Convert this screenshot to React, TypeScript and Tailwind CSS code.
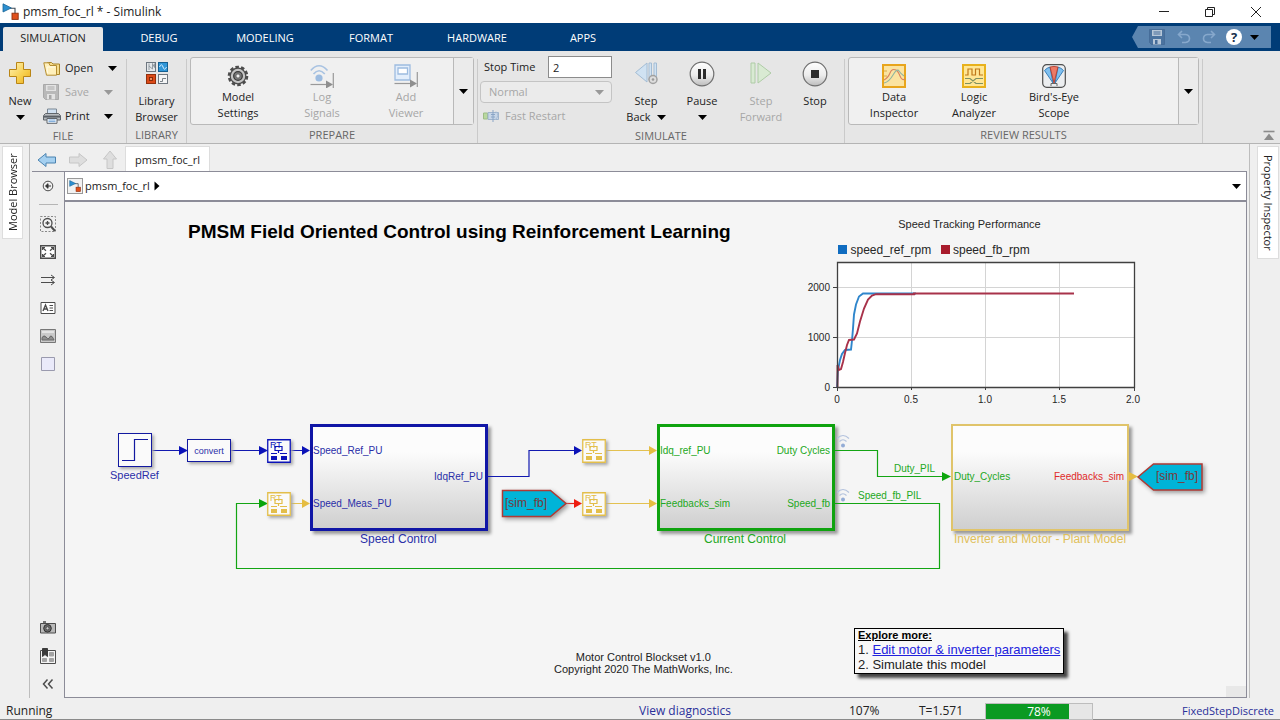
import React from "react";

type Kids = { children?: React.ReactNode };

/* ---------- small glyphs ---------- */

function Caret({ className = "text-black" }: { className?: string }) {
  return (
    <svg className={className} width="9" height="5" viewBox="0 0 9 5" aria-hidden="true">
      <path d="M0 0h9L4.5 5z" fill="currentColor" />
    </svg>
  );
}

function ModelIcon({ size }: { size: number }) {
  return (
    <svg width={size} height={size} viewBox="0 0 17 17" aria-hidden="true">
      <path d="M8 5.2h5v6" fill="none" stroke="#3c4a55" strokeWidth="1.1" />
      <path d="M1 0.8L9.3 4.9 1 9z" fill="#2c8fd0" stroke="#1b6496" strokeWidth="0.8" />
      <rect x="10" y="10.2" width="6.2" height="6.2" fill="#e0501c" stroke="#8f2f0d" strokeWidth="0.9" />
    </svg>
  );
}

function NewIcon() {
  return (
    <svg width="24" height="24" viewBox="0 0 24 24" aria-hidden="true">
      <defs>
        <linearGradient id="gold" x1="0" y1="0" x2="1" y2="1">
          <stop offset="0" stopColor="#fff3b8" />
          <stop offset="0.6" stopColor="#f7cf4d" />
          <stop offset="1" stopColor="#e9a91e" />
        </linearGradient>
      </defs>
      <path d="M8.5 1.5h7v7h7v7h-7v7h-7v-7h-7v-7h7z" fill="url(#gold)" stroke="#b98515" />
    </svg>
  );
}

function FolderIcon() {
  return (
    <svg width="18" height="16" viewBox="0 0 18 16" aria-hidden="true">
      <path d="M4.500 3.500V2.500h4l1.500 1.500h6.500v10.500H5" fill="#f5dc8c" stroke="#a98429" />
      <path d="M0.800 2.800h5L7 5.500h6.500v9.700H3.500z" fill="#fff0bb" stroke="#b48d31" />
      <path d="M4.500 13L4 7h8" fill="none" stroke="#fffbe6" />
    </svg>
  );
}

function FloppyIcon({ tone = "text-[#a9a9a9]" }: { tone?: string }) {
  return (
    <svg className={tone} width="16" height="16" viewBox="0 0 16 16" aria-hidden="true">
      <path d="M0.5 0.5h15v15h-13l-2-2z" fill="currentColor" opacity="0.75" />
      <path d="M0.5 0.5h15v15h-13l-2-2z" fill="none" stroke="currentColor" />
      <path d="M3 1h10v6H3z" fill="#fff" opacity="0.6" />
      <path d="M4.5 3h7M4.5 5h7" stroke="currentColor" />
      <path d="M4 10h8v5.5H4z" fill="#fff" opacity="0.6" />
      <path d="M6 11h2.5v4H6z" fill="currentColor" />
    </svg>
  );
}

function PrinterIcon() {
  return (
    <svg width="18" height="16" viewBox="0 0 18 16" aria-hidden="true">
      <path d="M4.5 6V1h9v5" fill="#cfe0f2" stroke="#7b8793" />
      <path d="M2.5 5.5h13l2 2v4.5H0.5V7.5z" fill="#b8bcc0" stroke="#5f656b" />
      <path d="M1 7.6h16v2H1z" fill="#5a6067" />
      <path d="M4 10.5h10v4.8H4z" fill="#f5faff" stroke="#5f656b" />
      <path d="M5.5 12h7M5.5 13.6h7" stroke="#7aa7d8" />
    </svg>
  );
}

function LibraryIcon() {
  return (
    <svg width="24" height="24" viewBox="0 0 24 24" aria-hidden="true">
      <rect x="1.5" y="1.5" width="9" height="9" fill="#e4e7ea" stroke="#6e7780" />
      <path d="M4 9V2.500M4 5l3.500 3V2.500l2 4V2.500" fill="none" stroke="#8a939b" strokeWidth="0.9" />
      <rect x="13.5" y="1.5" width="9" height="9" fill="#2f96d8" stroke="#155f91" />
      <path d="M14.5 6q2-4.500 3.500 0t3.500 0" fill="none" stroke="#d4edff" />
      <rect x="1.500" y="13.500" width="9" height="9" fill="#dc4a18" stroke="#92300d" />
      <rect x="4.500" y="16.500" width="3" height="3" fill="#ef8c60" stroke="#7d2606" strokeWidth="0.9" />
      <rect x="13.500" y="13.500" width="9" height="9" fill="#f4f5f6" stroke="#6e7780" />
      <path d="M15 20.500h2.500v-3h3.500" fill="none" stroke="#6b747c" strokeWidth="0.900" />
    </svg>
  );
}

function GearIcon() {
  return (
    <svg width="24" height="24" viewBox="0 0 24 24" aria-hidden="true">
      <circle cx="12" cy="12" r="9" fill="none" stroke="#4d4d4d" strokeWidth="2.600" strokeDasharray="3.500 2.150" />
      <circle cx="12" cy="12" r="7.800" fill="#c4c4c4" stroke="#4a4a4a" strokeWidth="1.200" />
      <circle cx="12" cy="12" r="4.300" fill="#7b7b7b" stroke="#3b3b3b" strokeWidth="1.300" />
      <circle cx="12" cy="12" r="2" fill="#f0f0f0" stroke="#4a4a4a" strokeWidth="0.600" />
    </svg>
  );
}

function LogIcon() {
  return (
    <svg width="24" height="24" viewBox="0 0 24 24" aria-hidden="true">
      <g fill="none" stroke="#a9c3e2" strokeWidth="1.700">
        <path d="M0.800 6.500Q9 -3 17.500 6.500" />
        <path d="M3.500 10Q9 3.500 14.800 10" />
      </g>
      <circle cx="9" cy="14" r="3.600" fill="#9dbce0" />
      <path d="M0.500 20.500h17" stroke="#999" strokeWidth="1.200" />
      <path d="M16 16.500l7 4-7 4z" fill="#8f8f8f" />
      <path d="M23.300 9v15" stroke="#999" strokeWidth="1.200" />
    </svg>
  );
}

function ViewerIcon() {
  return (
    <svg width="24" height="24" viewBox="0 0 24 24" aria-hidden="true">
      <path d="M1 1h15v15H1z" fill="#e3eefb" stroke="#9dbce0" strokeWidth="1.300" />
      <path d="M4 4h9.500v6H4z" fill="#fff" stroke="#9dbce0" strokeWidth="1.300" />
      <path d="M0.500 19.500h17" stroke="#999" strokeWidth="1.200" />
      <path d="M16 15.500l7 4-7 4z" fill="#8f8f8f" />
      <path d="M23.300 8v15" stroke="#999" strokeWidth="1.200" />
    </svg>
  );
}

function FastRestartIcon() {
  return (
    <svg width="17" height="14" viewBox="0 0 17 14" aria-hidden="true">
      <path d="M0.500 4h4v6h-4z" fill="#b9d8a0" stroke="#9dbd86" />
      <path d="M5 3.500h10.500v7H5z" fill="#c7d6e8" stroke="#9fb4cd" />
      <path d="M8 5.500h4M8 8h4M10 1v12" stroke="#8aa5c6" />
      <path d="M13 2.500q4 4-1 8.500" fill="none" stroke="#a9bdd5" />
    </svg>
  );
}

function StepBackIcon() {
  return (
    <svg width="24" height="24" viewBox="0 0 24 24" aria-hidden="true">
      <path d="M13 2v19L1.500 11.500z" fill="#d0e2f2" stroke="#a3bcd4" />
      <path d="M15 2h2.500v17H15zM20 2h2.500v14H20z" fill="#d0e2f2" stroke="#a3bcd4" />
      <circle cx="19" cy="18.500" r="4" fill="#ddd" stroke="#a0a0a0" strokeWidth="1.500" />
      <circle cx="19" cy="18.500" r="1.300" fill="#999" />
    </svg>
  );
}

function StepForwardIcon() {
  return (
    <svg width="24" height="24" viewBox="0 0 24 24" aria-hidden="true">
      <path d="M2 2h4v20H2z" fill="#d9ead3" stroke="#aecba6" />
      <path d="M9 2v20l13-10z" fill="#d9ead3" stroke="#aecba6" />
    </svg>
  );
}

function RoundButtonIcon({ children }: Kids) {
  return (
    <svg width="26" height="26" viewBox="0 0 26 26" aria-hidden="true">
      <defs>
        <linearGradient id="disc" x1="0" y1="0" x2="0" y2="1">
          <stop offset="0" stopColor="#ffffff" />
          <stop offset="0.550" stopColor="#ececec" />
          <stop offset="1" stopColor="#bdbdbd" />
        </linearGradient>
      </defs>
      <circle cx="13" cy="13" r="11.800" fill="url(#disc)" stroke="#6f6f6f" strokeWidth="1.200" />
      {children}
    </svg>
  );
}

function DataInspectorIcon() {
  return (
    <svg width="24" height="24" viewBox="0 0 24 24" aria-hidden="true">
      <path d="M1 1h22v22H1z" fill="#fbe3a0" stroke="#e8a51c" strokeWidth="2" />
      <path d="M2 16Q6 14 8 9t6-3q2 1 4 6t5 3" fill="none" stroke="#d9825f" strokeWidth="1.100" />
      <path d="M2 19q5-1 9-8t6-4 5 5" fill="none" stroke="#8fb5a0" strokeWidth="1.100" />
      <path d="M2 7h3M2 12h3" stroke="#d8a94a" />
    </svg>
  );
}

function LogicIcon() {
  return (
    <svg width="24" height="24" viewBox="0 0 24 24" aria-hidden="true">
      <path d="M1 1h22v22H1z" fill="#ffe694" stroke="#e8b11c" strokeWidth="2" />
      <path d="M3 11h3V5h4v6h3.500V5h4v6H21" fill="none" stroke="#c0791a" strokeWidth="1.200" />
      <path d="M3 14.500h5l6 5h7M3 19.500h5l6-5h7" fill="none" stroke="#7f9160" strokeWidth="1.200" />
    </svg>
  );
}

function BirdsEyeIcon() {
  return (
    <svg width="24" height="24" viewBox="0 0 24 24" aria-hidden="true">
      <rect x="0.700" y="0.700" width="22.600" height="22.600" rx="4" fill="#eceef0" stroke="#4f4f4f" strokeWidth="1.200" />
      <path d="M2.500 6.500Q5 3.800 8 3l3 16z" fill="#7fc0f0" stroke="#2c77b4" strokeWidth="0.900" />
      <path d="M21.500 6.500Q19 3.800 16 3l-3 16z" fill="#7fc0f0" stroke="#2c77b4" strokeWidth="0.900" />
      <path d="M8 3q4-1.200 8 0l-4 16z" fill="#ec7a66" stroke="#b23a2a" strokeWidth="0.900" />
      <path d="M9 22v-2.500h6V22" fill="none" stroke="#666" />
    </svg>
  );
}

/* ---------- ribbon pieces ---------- */

function Group({ label, className, children }: Kids & { label: string; className: string }) {
  return (
    <section aria-label={label} className={`flex h-full shrink-0 flex-col ${className}`}>
      <div className="flex h-[77px]">{children}</div>
      <div className="text-center leading-4 text-[#666]">{label}</div>
    </section>
  );
}

function Rule() {
  return <div className="mt-2 h-[84px] w-px shrink-0 bg-[#cacaca]" />;
}

function BigButton(props: {
  icon: React.ReactNode;
  lines: [string, string?];
  caret?: boolean;
  disabled?: boolean;
  className: string;
}) {
  const { icon, lines, caret, disabled, className } = props;
  return (
    <button
      type="button"
      disabled={disabled}
      className={`flex shrink-0 flex-col items-center pt-[10px] leading-4 ${disabled ? "text-[#a6a6a6]" : "text-[#222]"} ${className}`}
    >
      <span className="flex h-8 items-start justify-center">{icon}</span>
      <span className="h-4 whitespace-nowrap">{lines[0]}</span>
      <span className="flex h-4 items-center gap-[6px] whitespace-nowrap">
        {lines[1]}
        {caret && <Caret />}
      </span>
    </button>
  );
}

function GalleryButton(props: { icon: React.ReactNode; lines: [string, string]; disabled?: boolean; className: string }) {
  const { icon, lines, disabled, className } = props;
  return (
    <button
      type="button"
      disabled={disabled}
      className={`flex shrink-0 flex-col items-center pt-[6px] leading-4 ${disabled ? "text-[#a6a6a6]" : "text-[#222]"} ${className}`}
    >
      <span className="flex h-[25px] items-start">{icon}</span>
      <span>{lines[0]}</span>
      <span>{lines[1]}</span>
    </button>
  );
}

function Gallery({ label, className, children }: Kids & { label: string; className: string }) {
  return (
    <div className={`mt-[6px] flex h-[68px] rounded-[3px] border border-[#b9b9b9] bg-[#f0f0f0] ${className}`}>
      <div className="flex flex-1 pl-[5px]">{children}</div>
      <button type="button" aria-label={label} className="flex w-5 items-center justify-center border-l border-[#b9b9b9] bg-[#ebebeb]">
        <Caret />
      </button>
    </div>
  );
}

function FileRow(props: { icon: React.ReactNode; label: string; disabled?: boolean; caretClass: string }) {
  const { icon, label, disabled, caretClass } = props;
  return (
    <button
      type="button"
      disabled={disabled}
      className={`flex h-6 items-center text-left ${disabled ? "text-[#a6a6a6]" : "text-[#222]"}`}
    >
      <span className="flex w-[22px] items-center">{icon}</span>
      <span className={caretClass}>{label}</span>
      <Caret className={disabled ? "text-[#999]" : "text-black"} />
    </button>
  );
}

function Ribbon() {
  return (
    <div className="flex h-[93px] shrink-0 border-b border-[#b4b4b4] bg-[#e6e6e6]">
      <Group label="FILE" className="w-[126px]">
        <BigButton icon={<NewIcon />} lines={["New"]} caret className="w-10" />
        <div className="flex flex-col pt-[5px] pl-[3px]">
          <FileRow icon={<FolderIcon />} label="Open" caretClass="w-[43px]" />
          <FileRow icon={<FloppyIcon />} label="Save" disabled caretClass="w-[39px]" />
          <FileRow icon={<PrinterIcon />} label="Print" caretClass="w-[39px]" />
        </div>
      </Group>
      <Rule />
      <Group label="LIBRARY" className="w-[59px]">
        <BigButton icon={<LibraryIcon />} lines={["Library", "Browser"]} className="w-[59px]" />
      </Group>
      <Rule />
      <Group label="PREPARE" className="w-[290px]">
        <Gallery label="More prepare tools" className="ml-[3px] w-[284px]">
          <GalleryButton icon={<GearIcon />} lines={["Model", "Settings"]} className="w-[84px]" />
          <GalleryButton icon={<LogIcon />} lines={["Log", "Signals"]} disabled className="w-[84px]" />
          <GalleryButton icon={<ViewerIcon />} lines={["Add", "Viewer"]} disabled className="w-[84px]" />
        </Gallery>
      </Group>
      <Rule />
      <Group label="SIMULATE" className="w-[366px]">
        <div className="flex w-[134px] flex-col pt-[5px] pl-[2px]">
          <div className="flex h-[22px] items-center justify-between">
            <label htmlFor="stop-time" className="pl-1 text-[#222]">
              Stop Time
            </label>
            <input
              id="stop-time"
              defaultValue="2"
              className="h-[22px] w-16 border border-[#8c8c8c] bg-white px-1 text-[#222] outline-none"
            />
          </div>
          <div className="relative mt-[3px]">
            <select
              aria-label="Simulation mode"
              disabled
              className="h-[22px] w-full appearance-none rounded border border-[#c4c4c4] bg-[#ebebeb] pl-2 text-[#a6a6a6]"
            >
              <option>Normal</option>
            </select>
            <span className="pointer-events-none absolute top-[9px] right-2">
              <Caret className="text-[#999]" />
            </span>
          </div>
          <button type="button" disabled className="flex h-7 items-center gap-[5px] pl-[3px] text-[#a6a6a6]">
            <FastRestartIcon />
            Fast Restart
          </button>
        </div>
        <BigButton icon={<StepBackIcon />} lines={["Step", "Back"]} caret className="w-[68px]" />
        <BigButton
          icon={
            <RoundButtonIcon>
              <path d="M9 8h3v10H9zM14 8h3v10h-3z" fill="#2b2b2b" />
            </RoundButtonIcon>
          }
          lines={["Pause"]}
          caret
          className="w-11"
        />
        <BigButton icon={<StepForwardIcon />} lines={["Step", "Forward"]} disabled className="w-[74px]" />
        <BigButton
          icon={
            <RoundButtonIcon>
              <path d="M9 9h8v8H9z" fill="#2b2b2b" />
            </RoundButtonIcon>
          }
          lines={["Stop"]}
          className="w-[34px]"
        />
      </Group>
      <Rule />
      <Group label="REVIEW RESULTS" className="w-[357px]">
        <Gallery label="More review tools" className="ml-[3px] w-[351px]">
          <GalleryButton icon={<DataInspectorIcon />} lines={["Data", "Inspector"]} className="w-20" />
          <GalleryButton icon={<LogicIcon />} lines={["Logic", "Analyzer"]} className="w-20" />
          <GalleryButton icon={<BirdsEyeIcon />} lines={["Bird's-Eye", "Scope"]} className="w-20" />
        </Gallery>
      </Group>
      <Rule />
      <div className="flex flex-1 items-end justify-end pr-[5px] pb-[2px]">
        <button type="button" aria-label="Collapse toolstrip">
          <svg width="12" height="11" viewBox="0 0 12 11" className="block" aria-hidden="true">
            <path d="M0.500 1.500h11" stroke="#8b8b8b" strokeWidth="1.600" />
            <path d="M6 3.500l5 6.500H1z" fill="#8b8b8b" />
          </svg>
        </button>
      </div>
    </div>
  );
}

/* ---------- title and tabs ---------- */

function TitleBar() {
  return (
    <header className="flex h-[23px] shrink-0 items-center bg-white pl-[2px] text-[12px]">
      <ModelIcon size={17} />
      <h1 className="pl-1 text-[#222]">pmsm_foc_rl * - Simulink</h1>
      <div className="ml-auto flex items-center">
        <button type="button" aria-label="Minimize" className="flex w-[46px] justify-center">
          <svg width="12" height="12" viewBox="0 0 12 12" aria-hidden="true">
            <path d="M1 5.500h10" stroke="#222" />
          </svg>
        </button>
        <button type="button" aria-label="Restore" className="flex w-[45px] justify-center">
          <svg width="12" height="12" viewBox="0 0 12 12" aria-hidden="true">
            <path d="M1.500 3.500h7v7h-7zM3.500 3.500v-2h7v7h-2" fill="none" stroke="#222" />
          </svg>
        </button>
        <button type="button" aria-label="Close" className="flex w-12 justify-center">
          <svg width="12" height="12" viewBox="0 0 12 12" aria-hidden="true">
            <path d="M1 1l10 10M11 1L1 11" stroke="#222" />
          </svg>
        </button>
      </div>
    </header>
  );
}

function TabBar() {
  const tabs = ["DEBUG", "MODELING", "FORMAT", "HARDWARE", "APPS"];
  return (
    <nav aria-label="Toolstrip" className="flex h-7 shrink-0 items-end bg-[#003c77]">
      <button type="button" className="mx-[3px] h-6 w-[100px] rounded-t-[2px] bg-[#e6e6e6] pb-[2px] text-[#222]">
        SIMULATION
      </button>
      {tabs.map((t) => (
        <button key={t} type="button" className="h-6 w-[106px] pb-[2px] font-medium text-white">
          {t}
        </button>
      ))}
      <div className="mr-[9px] mb-[3px] ml-auto flex h-[22px] w-[139px] items-center bg-[#5b85b0] pl-[17px] [clip-path:polygon(6px_0,100%_0,100%_100%,6px_100%,0_50%)]">
        <button type="button" aria-label="Save">
          <FloppyIcon tone="text-[#466d99]" />
        </button>
        <button type="button" aria-label="Undo" className="ml-3">
          <svg width="14" height="14" viewBox="0 0 14 14" aria-hidden="true">
            <path d="M5 1L1.500 4.500 5 8M2 4.500h6.500q4 0.500 4 4t-4 4H5" fill="none" stroke="#86a8cc" strokeWidth="1.600" />
          </svg>
        </button>
        <button type="button" aria-label="Redo" className="ml-[11px]">
          <svg width="14" height="14" viewBox="0 0 14 14" aria-hidden="true">
            <path d="M9 1l3.500 3.500L9 8M12 4.500H5.500q-4 0.500-4 4t4 4H9" fill="none" stroke="#86a8cc" strokeWidth="1.600" />
          </svg>
        </button>
        <button
          type="button"
          aria-label="Help"
          className="ml-[10px] flex h-4 w-4 items-center justify-center rounded-full bg-white text-[13px] leading-4 font-bold text-[#16304d]"
        >
          ?
        </button>
        <button type="button" aria-label="More quick access" className="ml-2">
          <Caret />
        </button>
      </div>
    </nav>
  );
}

/* ---------- editor chrome ---------- */

function BlockArrow({ dir, active }: { dir: "left" | "right" | "up"; active?: boolean }) {
  const rot = { left: "", right: "rotate-180", up: "rotate-90" }[dir];
  return (
    <svg className={rot} width="20" height="16" viewBox="0 0 20 16" aria-hidden="true">
      <path
        d="M1 8l8-6.500V5h9.500v6H9v3.500z"
        fill={active ? "#a5d0f0" : "#dedede"}
        stroke={active ? "#4b83b0" : "#c6c6c6"}
      />
    </svg>
  );
}

function PaletteButton({ label, children }: Kids & { label: string }) {
  return (
    <button type="button" aria-label={label} className="flex h-7 w-8 items-center justify-center">
      <svg width="16" height="16" viewBox="0 0 16 16" fill="none" stroke="#4c4c4c" aria-hidden="true">
        {children}
      </svg>
    </button>
  );
}

function Palette() {
  return (
    <aside aria-label="Palette" className="flex w-8 shrink-0 flex-col items-center">
      <PaletteButton label="Hide browser">
        <circle cx="8" cy="8" r="4.800" />
        <path d="M11 8H6M8 5.700L5.500 8 8 10.300z" fill="#333" stroke="#333" />
      </PaletteButton>
      <div className="mt-1 mb-[5px] h-px w-[19px] bg-[#b5b5b5]" />
      <PaletteButton label="Zoom">
        <path d="M0.500 0.500h15v15H0.500z" stroke="#888" strokeDasharray="2 1.500" />
        <circle cx="7.500" cy="7" r="4.500" fill="#f3f3f3" strokeWidth="1.300" />
        <path d="M5.500 7h4M7.500 5v4" strokeWidth="1.300" />
        <path d="M11 10.500l4 4.500" strokeWidth="2" />
      </PaletteButton>
      <PaletteButton label="Fit to view">
        <path d="M0.700 1.700h14.600v12.600H0.700z" fill="#fff" strokeWidth="1.400" />
        <path
          d="M2.500 6V3.500H5M2.700 3.700l3.300 3M11 3.500h2.500V6M13.300 3.700l-3.300 3M2.500 10v2.500H5M2.700 12.300l3.300-3M11 12.500h2.500V10M13.300 12.300l-3.300-3"
          strokeWidth="1.200"
        />
      </PaletteButton>
      <PaletteButton label="Signal routing">
        <path d="M1 5.500h13M1 10.500h13" strokeWidth="1.200" />
        <path d="M11 3l3.500 2.500L11 8M11 8l3.500 2.500L11 13" />
      </PaletteButton>
      <PaletteButton label="Annotation">
        <path d="M1 2.500h14v11H1z" fill="#fff" />
        <path d="M3 11l2.500-6 2.500 6M4 9h3" strokeWidth="1.400" />
        <path d="M9.500 5.500H13M9.500 8H13M9.500 10.500H13" />
      </PaletteButton>
      <PaletteButton label="Image">
        <path d="M0.500 1.500h15v13H0.500z" fill="#c9c9c9" stroke="#777" />
        <path d="M2 4h12" stroke="#fff" />
        <path d="M2 12V9.500q2-3 4-0.500t3 1.500q1.500-4 3-2t2 3.500V12z" fill="#8f8f8f" stroke="#666" />
      </PaletteButton>
      <PaletteButton label="Area">
        <path d="M1.500 1.500h13v13h-13z" fill="#eaeafa" stroke="#9a9aae" />
      </PaletteButton>
      <div className="mt-auto flex flex-col">
        <PaletteButton label="Screenshot">
          <path d="M0.500 3.500h15v9.500H0.500z" fill="#b9b9b9" />
          <path d="M3 2h3" strokeWidth="1.500" />
          <circle cx="7.500" cy="8.300" r="3.800" fill="#6a6a6a" stroke="#2f2f2f" />
          <circle cx="7.500" cy="8.300" r="1.600" fill="#ccc" />
        </PaletteButton>
        <PaletteButton label="Viewmarks">
          <path d="M0.500 2.500h15v13H0.500z" fill="#f4f4f4" />
          <path d="M9.500 4.500h4v3.500h-4zM2.500 10.500h4v3h-4zM9.500 10.500h4v3h-4z" fill="#a3a3a3" stroke="#a3a3a3" />
          <path d="M2.500 0.500h5v8L5 6.500 2.500 8.500z" fill="#3c3c3c" stroke="#3c3c3c" />
        </PaletteButton>
        <PaletteButton label="Collapse palette">
          <path d="M7.500 3.500L3.500 8l4 4.500M12.500 3.500L8.500 8l4 4.500" strokeWidth="1.500" />
        </PaletteButton>
      </div>
    </aside>
  );
}

/* ---------- canvas ---------- */

function Subsystem(props: {
  className: string;
  inputs: { text: string; className: string }[];
  outputs: { text: string; className: string }[];
}) {
  return (
    <div
      className={`absolute h-[107px] w-[178px] bg-linear-to-b from-[#fcfcfc] from-25% to-[#cfcfcf] shadow-[3px_3px_3px_#9a9a9a] ${props.className}`}
    >
      {[...props.inputs, ...props.outputs].map((p) => (
        <span key={p.text} className={`absolute text-[10px] leading-[14px] whitespace-nowrap ${p.className}`}>
          {p.text}
        </span>
      ))}
    </div>
  );
}

function RateTransition({ className, blue }: { className: string; blue?: boolean }) {
  const c = blue ? "#0b12b8" : "#e3be4a";
  return (
    <svg
      className={`absolute shadow-[2px_2px_3px_#a8a8a8] ${className}`}
      width="24"
      height="24"
      viewBox="0 0 24 24"
      role="img"
      aria-label="Rate transition"
    >
      <path d="M0.750 0.750h22.500v22.500H0.750z" fill="#fafafa" stroke={c} strokeWidth="1.300" />
      <text x="3" y="8.500" fontSize="9" fill={c}>
        RT
      </text>
      <path d="M8 7.500h7v4H8zM11.500 11.500V14M4 14.500h6M13 14.500h7" fill="none" stroke={c} strokeWidth="1.200" />
      <rect x="4" y="17" width="6" height="4" fill={c} />
      <rect x="14" y="17" width="6" height="4" fill={c} />
    </svg>
  );
}

function LogBadge({ className }: { className: string }) {
  return (
    <svg className={`absolute ${className}`} width="14" height="14" viewBox="0 0 14 14" aria-hidden="true">
      <path d="M1 4.500Q7 -1.500 13 4.500M3.500 7.500Q7 4 10.500 7.500" fill="none" stroke="#b3c2dd" strokeWidth="1.100" />
      <circle cx="7" cy="11.500" r="2" fill="#93acd6" />
    </svg>
  );
}

function Wires() {
  return (
    <svg className="absolute top-0 left-0" width="1181" height="495" viewBox="65 202 1181 495" aria-hidden="true">
      <g fill="none" stroke="#1219b0" strokeWidth="1.200">
        <path d="M151 450.500h30M231 450.500h30M290 450.500h14M487 476.500h42v-26h47" />
      </g>
      <g fill="#0b12b8">
        <path d="M179 446l9 4.500-9 4.500zM259 446l9 4.500-9 4.500zM302 446l8 4.500-8 4.500zM574 446l8 4.500-8 4.500z" />
      </g>
      <g fill="none" stroke="#13a513" strokeWidth="1.200">
        <path d="M835 450.500h42.500v26H944M835 503.500h104.500v65H236.500v-65H262" />
      </g>
      <path d="M259 499l9 4.500-9 4.500zM942 472l9 4.500-9 4.500z" fill="#0ba50b" />
      <path d="M291 503.500h13M606 450.500h44M606 503.500h44" stroke="#e3c150" strokeWidth="1.200" />
      <path
        d="M302 499l8 4.500-8 4.500zM649 446l8 4.500-8 4.500zM649 499l8 4.500-8 4.500zM1129 472l9 4.500-9 4.500z"
        fill="#e5bd42"
      />
      <path d="M566 503.500h12" stroke="#e3261c" strokeWidth="1.200" />
      <path d="M574 499l8 4.500-8 4.500z" fill="#ee1c10" />
      <g stroke="#b03a34" strokeWidth="1.500" fill="#00b4d8">
        <path className="drop-shadow-[2px_2px_2px_#999]" d="M502.500 490.500h48l15.500 13-15.500 13h-48z" />
        <path className="drop-shadow-[2px_2px_2px_#999]" d="M1202 464h-48.500l-15.500 13 15.500 13H1202z" />
      </g>
    </svg>
  );
}

function Chart() {
  const xs = ["0", "0.5", "1.0", "1.5", "2.0"];
  const ys = ["2000", "1000", "0"];
  return (
    <svg
      className="absolute top-[12px] left-[735px]"
      width="350"
      height="196"
      viewBox="800 214 350 196"
      role="img"
      aria-label="Speed Tracking Performance"
    >
      <g fill="#262626" fontSize="11" textAnchor="middle">
        <text x="969.500" y="228">Speed Tracking Performance</text>
      </g>
      <rect x="838" y="245" width="9" height="9" fill="#0f6cc0" />
      <rect x="941" y="245" width="9" height="9" fill="#a81c2c" />
      <g fill="#262626" fontSize="12">
        <text x="850.500" y="254">speed_ref_rpm</text>
        <text x="953" y="254">speed_fb_rpm</text>
      </g>
      <rect x="837" y="262" width="297" height="125" fill="#fff" />
      <path d="M837 287.500h297M837 337.500h297M911.500 262v125M985.500 262v125M1059.500 262v125" stroke="#d4d4d4" />
      <path
        d="M837 387l1-17 2-10 2-6 3-4 6-0.500 1-9 1-12 1-14 2-10 3-8 4-3H916"
        fill="none"
        stroke="#2f86cc"
        strokeWidth="1.900"
      />
      <path
        d="M837.500 387v-22l1.500 5 2-1 2-7 2-9 2-8 2-5 5-0.500 3-6 3-12 4-13 4-9 4-4 4-1.300h38V293.500h160"
        fill="none"
        stroke="#a8324a"
        strokeWidth="1.900"
      />
      <path d="M837.500 262.500h297v125h-297z" fill="none" stroke="#404040" strokeWidth="1.300" />
      <path
        d="M833 287.500h4M833 337.500h4M833 387.500h4M837.500 387v4M911.500 387v3M985.500 387v3M1059.500 387v3M1134.500 387v4"
        stroke="#404040"
      />
      <g fill="#262626" fontSize="10" textAnchor="end">
        {ys.map((t, i) => (
          <text key={t} x="830" y={290.5 + i * 50}>
            {t}
          </text>
        ))}
      </g>
      <g fill="#262626" fontSize="10" textAnchor="middle">
        {xs.map((t, i) => (
          <text key={t} x={837 + i * 74} y="402.500">
            {t}
          </text>
        ))}
      </g>
    </svg>
  );
}

function Label({ className, children }: Kids & { className: string }) {
  return <span className={`absolute whitespace-nowrap ${className}`}>{children}</span>;
}

function Canvas() {
  return (
    <main className="relative flex-1 overflow-hidden border-b border-[#8c8c98] bg-[#f5f5f5] font-['Liberation_Sans',Arial,sans-serif]">
      <h2 className="absolute top-[15px] left-[123px] text-[19px] leading-[30px] font-bold whitespace-nowrap text-black">
        PMSM Field Oriented Control using Reinforcement Learning
      </h2>
      <Chart />

      <Subsystem
        className="top-[222px] left-[245px] border-[3px] border-[#1016a6]"
        inputs={[
          { text: "Speed_Ref_PU", className: "top-[17px] left-0 text-[#2a2fa8]" },
          { text: "Speed_Meas_PU", className: "top-[70px] left-0 text-[#2a2fa8]" },
        ]}
        outputs={[{ text: "IdqRef_PU", className: "top-[43px] right-[2px] text-[#2a2fa8]" }]}
      />
      <Subsystem
        className="top-[222px] left-[592px] border-[3px] border-[#0fa30f]"
        inputs={[
          { text: "Idq_ref_PU", className: "top-[17px] left-0 text-[#22a822]" },
          { text: "Feedbacks_sim", className: "top-[70px] left-0 text-[#22a822]" },
        ]}
        outputs={[
          { text: "Duty Cycles", className: "top-[17px] right-[2px] text-[#22a822]" },
          { text: "Speed_fb", className: "top-[70px] right-[2px] text-[#22a822]" },
        ]}
      />
      <Subsystem
        className="top-[222px] left-[886px] border-2 border-[#e0c46a]"
        inputs={[{ text: "Duty_Cycles", className: "top-[44px] left-px text-[#22a822]" }]}
        outputs={[{ text: "Feedbacks_sim", className: "top-[44px] right-[3px] text-[#e02a2a]" }]}
      />
      <Wires />

      <svg
        className="absolute top-[231px] left-[53px] border border-[#1219a0] bg-[#fafafa] shadow-[2px_2px_3px_#a8a8a8]"
        width="34"
        height="34"
        viewBox="0 0 32 32"
        role="img"
        aria-label="Step"
      >
        <path d="M3 26.500h12.500v-21H29" fill="none" stroke="#1219a0" strokeWidth="1.200" />
      </svg>
      <div className="absolute top-[237px] left-[122px] flex h-[23px] w-11 items-center justify-center border border-[#1219a0] bg-[#fafafa] text-[9px] text-[#2a2fa8] shadow-[2px_2px_3px_#a8a8a8]">
        convert
      </div>
      <RateTransition blue className="top-[237px] left-[202px]" />
      <RateTransition className="top-[290px] left-[202px]" />
      <RateTransition className="top-[237px] left-[517px]" />
      <RateTransition className="top-[290px] left-[517px]" />
      <LogBadge className="top-[232px] left-[771px]" />
      <LogBadge className="top-[286px] left-[771px]" />

      <Label className="top-[266px] left-[45px] text-[11px] leading-[14px] text-[#2a2fa8]">SpeedRef</Label>
      <Label className="top-[329px] left-[295px] text-[12px] leading-4 text-[#2a2fa8]">Speed Control</Label>
      <Label className="top-[329px] left-[639px] text-[12px] leading-4 text-[#22a822]">Current Control</Label>
      <Label className="top-[329px] left-[889px] text-[12px] leading-4 text-[#e0c05a]">Inverter and Motor - Plant Model</Label>
      <Label className="top-[260px] left-[829px] text-[10px] leading-[14px] text-[#22a822]">Duty_PIL</Label>
      <Label className="top-[287px] left-[793px] text-[10px] leading-[14px] text-[#22a822]">Speed_fb_PIL</Label>
      <Label className="top-[293px] left-[440px] text-[12px] leading-4 text-[#7a3a3a]">[sim_fb]</Label>
      <Label className="top-[266px] left-[1091px] text-[12px] leading-4 text-[#7a3a3a]">[sim_fb]</Label>

      <div className="absolute top-[449px] left-[489px] text-center text-[11px] leading-3 text-[#222]">
        Motor Control Blockset v1.0
        <br />
        Copyright 2020 The MathWorks, Inc.
      </div>

      <div className="absolute top-[426px] left-[789px] h-[46px] w-[210px] border border-black bg-[#f8f8f8] pl-[3px] text-[13px] leading-[15px] whitespace-nowrap text-[#222] shadow-[4px_4px_3px_#444]">
        <div className="text-[11px] leading-[13px] font-bold text-black underline">Explore more:</div>
        <div>
          1.{" "}
          <a href="#parameters" className="text-[#2222dd] underline">
            Edit motor &amp; inverter parameters
          </a>
        </div>
        <div>2. Simulate this model</div>
      </div>
      <div className="absolute right-0 bottom-0 h-[11px] w-5 bg-[#e8e8e8]" />
    </main>
  );
}

/* ---------- page ---------- */

export default function App() {
  return (
    <div className="flex h-screen flex-col overflow-hidden bg-[#efefef] font-['Open_Sans','Noto_Sans',sans-serif] text-[11px] leading-4">
      <TitleBar />
      <TabBar />
      <Ribbon />
      <div className="flex min-h-0 flex-1">
        <div className="w-[29px] shrink-0 pt-[2px] pl-[2px]">
          <button
            type="button"
            className="flex h-[93px] w-[21px] rotate-180 items-center justify-center border border-[#ddd] bg-white text-[#222] [writing-mode:vertical-rl]"
          >
            Model Browser
          </button>
        </div>
        <div className="flex min-w-0 flex-1 flex-col border-x border-[#bdbdbd] pr-[2px] pl-[2px]">
          <div className="flex h-[27px] shrink-0 items-end">
            <div className="flex h-[27px] items-center pt-1">
              <button type="button" aria-label="Back" className="flex w-[30px] justify-center">
                <BlockArrow dir="left" active />
              </button>
              <button type="button" aria-label="Forward" className="flex w-8 justify-center">
                <BlockArrow dir="right" />
              </button>
              <button type="button" aria-label="Up to parent" className="flex w-[31px] justify-center">
                <BlockArrow dir="up" />
              </button>
            </div>
            <button type="button" className="h-[25px] w-[85px] border border-b-0 border-[#ddd] bg-white pt-px text-[#222]">
              pmsm_foc_rl
            </button>
          </div>
          <div className="flex min-h-0 flex-1 border-t border-[#8c8c98]">
            <Palette />
            <div className="flex min-w-0 flex-1 flex-col border-x border-[#8c8c98]">
              <div className="flex h-[30px] shrink-0 items-center border-b-2 border-[#8c8c98] bg-white pr-[5px] pl-[2px]">
                <span className="flex h-4 w-4 items-center justify-center border border-[#999] bg-[#f2f2f2]">
                  <ModelIcon size={12} />
                </span>
                <span className="pl-[2px] text-[#222]">pmsm_foc_rl</span>
                <svg className="ml-1" width="6" height="10" viewBox="0 0 6 10" aria-hidden="true">
                  <path d="M0.500 0.500L5.500 5l-5 4.500z" />
                </svg>
                <button type="button" aria-label="Show path history" className="ml-auto">
                  <Caret />
                </button>
              </div>
              <Canvas />
            </div>
          </div>
        </div>
        <div className="w-[30px] shrink-0 pt-[2px] pl-[7px]">
          <button
            type="button"
            className="flex h-[113px] w-[22px] items-center justify-center border border-[#ddd] bg-white text-[#222] [writing-mode:vertical-rl]"
          >
            Property Inspector
          </button>
        </div>
      </div>
      <footer className="flex h-[22px] shrink-0 items-center border-b border-[#8a8a8a] px-[6px] pt-[5px] text-[12px] text-[#222]">
        <span className="flex-1">Running</span>
        <a href="#diagnostics" className="text-[#2a2f9a]">
          View diagnostics
        </a>
        <div className="flex w-[543px] items-center justify-end">
          <span className="w-[70px]">107%</span>
          <span className="w-[66px]">T=1.571</span>
          <div
            role="progressbar"
            aria-label="Simulation progress"
            aria-valuenow={78}
            className="relative mr-[89px] h-[17px] w-[108px] border border-[#bdbdbd] bg-[#e6e6e6] text-center text-white"
          >
            <div className="absolute inset-y-0 left-0 bg-[#0b9a22]" style={{ width: "78%" }} />
            <span className="relative">78%</span>
          </div>
          <span className="text-[11px] text-[#2a2f9a]">FixedStepDiscrete</span>
        </div>
      </footer>
    </div>
  );
}
